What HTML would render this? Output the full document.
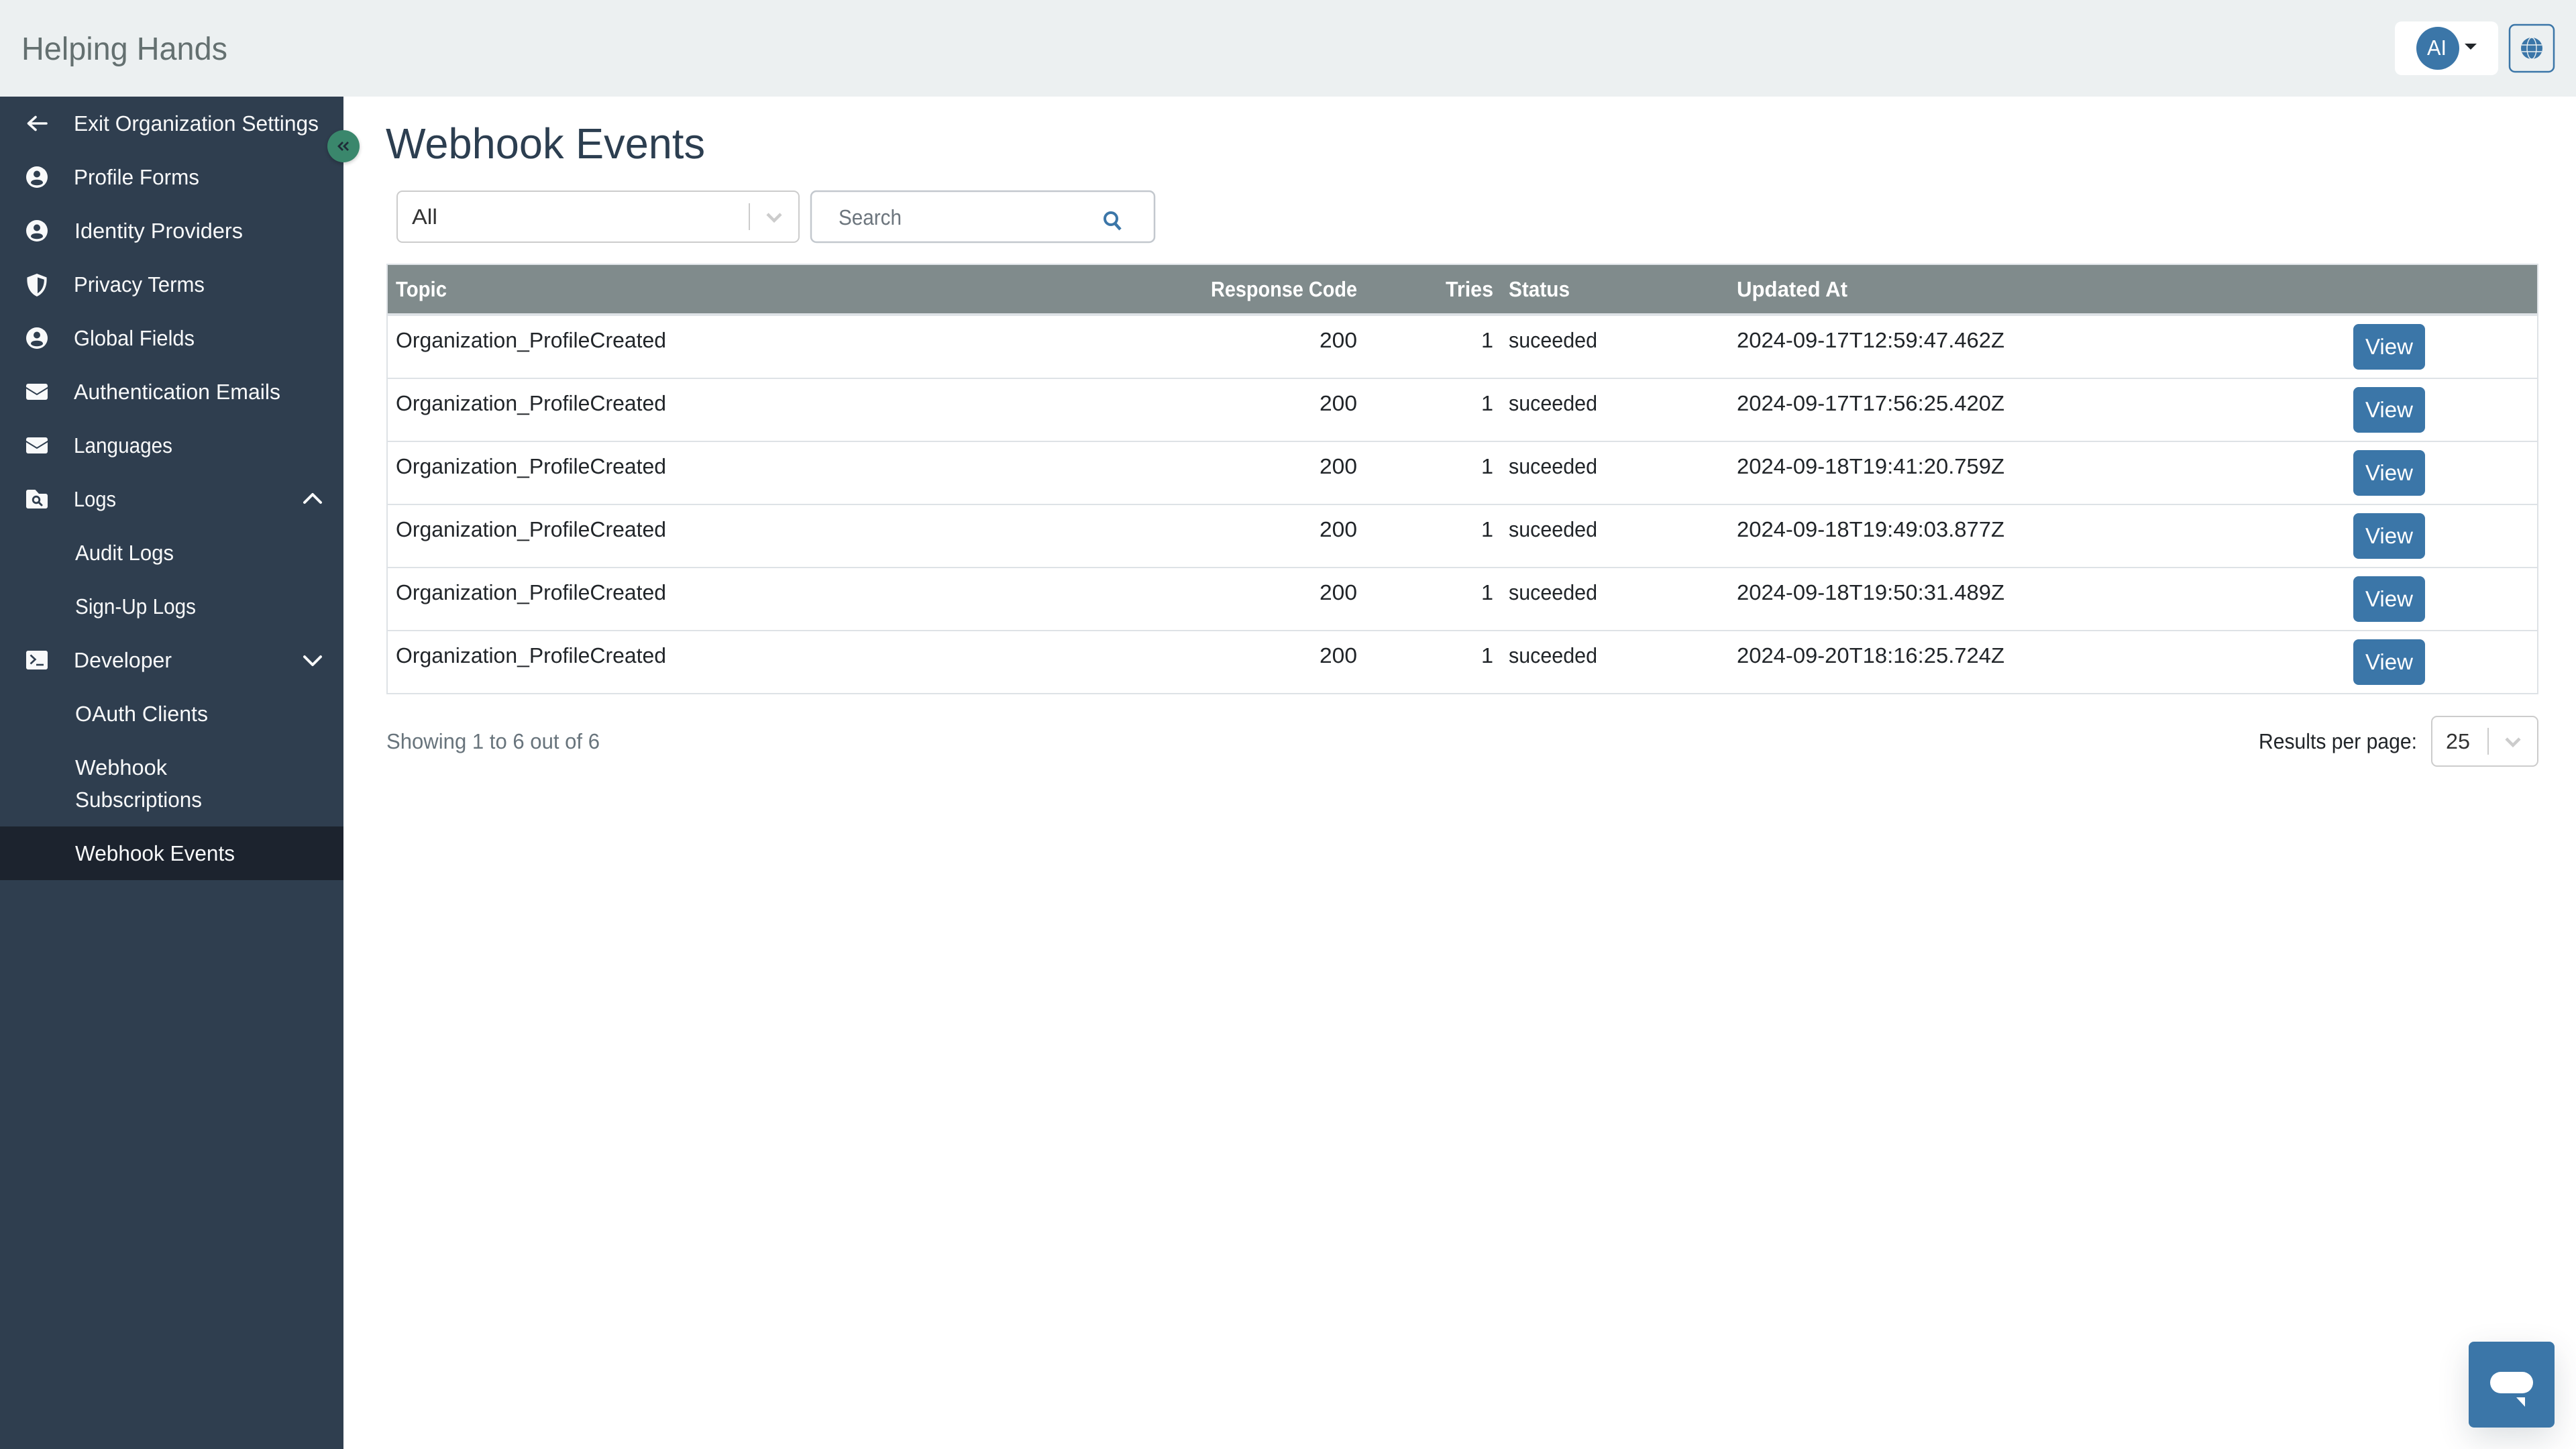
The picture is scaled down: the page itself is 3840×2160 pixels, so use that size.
<!DOCTYPE html>
<html lang="en">
<head>
<meta charset="utf-8">
<title>Webhook Events</title>
<style>
html,body{margin:0;padding:0;background:#fff;width:3840px;height:2160px;overflow:hidden}
svg{display:block;position:absolute;left:0;top:0}
text{font-family:"Liberation Sans",Arial,sans-serif;font-size:32px;text-rendering:geometricPrecision}
.s{fill:#f8f9fa}
.d{fill:#212529}
.h{fill:#fff;font-weight:700}
.b{fill:#fff;font-size:33px}
.m{fill:#68747c}
.ic{fill:#f8f9fa}
.dk{fill:#2f3e4f}
</style>
</head>
<body>
<svg width="3840" height="2160" viewBox="0 0 3840 2160" xmlns="http://www.w3.org/2000/svg">
<defs>
<filter id="sh" x="-80%" y="-80%" width="260%" height="260%"><feGaussianBlur stdDeviation="24"/></filter>
<filter id="sh2" x="-50%" y="-50%" width="200%" height="200%"><feGaussianBlur stdDeviation="3"/></filter>
<g id="user"><circle cx="55" cy="264" r="16" class="ic"/><circle cx="55" cy="259.500" r="5" class="dk"/><path d="M46 272.500c0-3 3.500-4.800 9-4.800s9 1.800 9 4.800c0 1.600-4 3.700-9 3.700s-9-2.100-9-3.700z" class="dk"/></g>
<g id="mail"><rect x="39" y="572" width="32" height="24" rx="3" class="ic"/><path d="M38 577.500l17 10.500 17-10.500" fill="none" stroke="#2f3e4f" stroke-width="2"/></g>
</defs>

<!-- top bar -->
<rect x="0" y="0" width="3840" height="144" fill="#ecf0f1"/>
<text x="32" y="89" style="font-size:48px" fill="#647070" textLength="307" lengthAdjust="spacingAndGlyphs">Helping Hands</text>
<rect x="3570" y="32" width="154" height="80" rx="10" fill="#fff"/>
<circle cx="3634" cy="72" r="32" fill="#3b76a8"/>
<text x="3618" y="82" style="font-size:32px" fill="#fff" textLength="29" lengthAdjust="spacingAndGlyphs">AI</text>
<path d="M3674 65h18l-9 9z" fill="#212529"/>
<rect x="3741" y="37" width="66" height="70" rx="8" fill="none" stroke="#3b76a8" stroke-width="2.500"/>
<circle cx="3774" cy="72" r="16" fill="#3b76a8"/>
<ellipse cx="3774" cy="72" rx="7" ry="16" fill="none" stroke="#ecf0f1" stroke-width="1.400"/>
<path d="M3759 67h30M3759 77h30" stroke="#ecf0f1" stroke-width="1.400" fill="none"/>

<!-- sidebar -->
<rect x="0" y="144" width="512" height="2016" fill="#2f3e4f"/>
<rect x="0" y="1232" width="512" height="80" fill="#1c232e"/>

<path d="M69 184H43M53 174.500L42.500 184 53 193.500" fill="none" stroke="#f8f9fa" stroke-width="3.600" stroke-linecap="round" stroke-linejoin="round"/>
<use href="#user"/>
<use href="#user" y="80"/>
<path d="M55 408l14.500 5.500c.8 12-3 23-14.500 28.500-11.500-5.500-15.300-16.500-14.500-28.500z" class="ic"/>
<path d="M56 413.500l9.800 3.300c.2 8.500-2.800 16-9.800 20.500z" class="dk"/>
<use href="#user" y="240"/>
<use href="#mail"/>
<use href="#mail" y="80"/>
<path d="M39 733c0-1.700 1.300-3 3-3h10.500l5.500 6h10c1.700 0 3 1.300 3 3v16c0 1.700-1.300 3-3 3H42c-1.700 0-3-1.300-3-3z" class="ic"/>
<circle cx="54" cy="745" r="4.800" fill="none" stroke="#2f3e4f" stroke-width="2.800"/>
<path d="M57.500 748.500L62 753" stroke="#2f3e4f" stroke-width="3" stroke-linecap="round"/>
<path d="M39 973c0-1.700 1.300-3 3-3h26c1.700 0 3 1.300 3 3v22c0 1.700-1.300 3-3 3H42c-1.700 0-3-1.300-3-3z" class="ic"/>
<path d="M45.500 976.500l7 6.500-7 6.500" fill="none" stroke="#2f3e4f" stroke-width="2.600"/>
<path d="M54 991h11" stroke="#2f3e4f" stroke-width="2.600"/>

<text class="s" x="110" y="195" textLength="365" lengthAdjust="spacingAndGlyphs">Exit Organization Settings</text>
<text class="s" x="110" y="275" textLength="187" lengthAdjust="spacingAndGlyphs">Profile Forms</text>
<text class="s" x="111" y="355" textLength="251" lengthAdjust="spacingAndGlyphs">Identity Providers</text>
<text class="s" x="110" y="435" textLength="195" lengthAdjust="spacingAndGlyphs">Privacy Terms</text>
<text class="s" x="110" y="515" textLength="180" lengthAdjust="spacingAndGlyphs">Global Fields</text>
<text class="s" x="110" y="595" textLength="308" lengthAdjust="spacingAndGlyphs">Authentication Emails</text>
<text class="s" x="110" y="675" textLength="147" lengthAdjust="spacingAndGlyphs">Languages</text>
<text class="s" x="110" y="755" textLength="63" lengthAdjust="spacingAndGlyphs">Logs</text>
<text class="s" x="112" y="835" textLength="147" lengthAdjust="spacingAndGlyphs">Audit Logs</text>
<text class="s" x="112" y="915" textLength="180" lengthAdjust="spacingAndGlyphs">Sign-Up Logs</text>
<text class="s" x="110" y="995" textLength="146" lengthAdjust="spacingAndGlyphs">Developer</text>
<text class="s" x="112" y="1075" textLength="198" lengthAdjust="spacingAndGlyphs">OAuth Clients</text>
<text class="s" x="112" y="1155" textLength="137" lengthAdjust="spacingAndGlyphs">Webhook</text>
<text class="s" x="112" y="1203" textLength="189" lengthAdjust="spacingAndGlyphs">Subscriptions</text>
<text class="s" x="112" y="1283" textLength="238" lengthAdjust="spacingAndGlyphs">Webhook Events</text>

<path d="M454 749l12-12 12 12" fill="none" stroke="#f8f9fa" stroke-width="4" stroke-linecap="round" stroke-linejoin="round"/>
<path d="M454 979l12 12 12-12" fill="none" stroke="#f8f9fa" stroke-width="4" stroke-linecap="round" stroke-linejoin="round"/>

<!-- collapse -->
<circle cx="512" cy="220" r="24" fill="#000" opacity=".22" filter="url(#sh2)"/>
<circle cx="512" cy="218" r="24" fill="#3a876c"/>
<path d="M511 212l-6 6 6 6M519 212l-6 6 6 6" fill="none" stroke="#1f2c38" stroke-width="2.800"/>

<!-- title -->
<text x="575" y="236" style="font-size:64px" fill="#2c3e50" textLength="476" lengthAdjust="spacingAndGlyphs">Webhook Events</text>

<!-- filters -->
<rect x="592" y="285" width="599" height="76" rx="8" fill="#fff" stroke="#cccccc" stroke-width="2"/>
<rect x="1116" y="303" width="2" height="40" fill="#cccccc"/>
<path d="M1144 319l10 10 10-10" fill="none" stroke="#cccccc" stroke-width="4.500"/>
<text x="614" y="334" style="font-size:32px" fill="#333" textLength="38" lengthAdjust="spacingAndGlyphs">All</text>
<rect x="1209" y="285" width="512" height="76" rx="8" fill="#fff" stroke="#c3c8ce" stroke-width="2.500"/>
<text x="1250" y="335" style="font-size:32px" fill="#6c757d" textLength="94" lengthAdjust="spacingAndGlyphs">Search</text>
<circle cx="1656" cy="326" r="9" fill="none" stroke="#3b76a8" stroke-width="4"/>
<path d="M1662 333l8 9" stroke="#3b76a8" stroke-width="4.500" fill="none"/>

<!-- table -->
<rect x="576" y="393" width="3208" height="642" fill="#dee2e6"/>
<rect x="578" y="395" width="3204" height="72" fill="#808b8c"/>
<rect x="578" y="471" width="3204" height="92" fill="#fff"/>
<rect x="578" y="565" width="3204" height="92" fill="#fff"/>
<rect x="578" y="659" width="3204" height="92" fill="#fff"/>
<rect x="578" y="753" width="3204" height="92" fill="#fff"/>
<rect x="578" y="847" width="3204" height="92" fill="#fff"/>
<rect x="578" y="941" width="3204" height="92" fill="#fff"/>

<text class="h" x="590" y="442" textLength="76" lengthAdjust="spacingAndGlyphs">Topic</text>
<text class="h" x="1805" y="442" textLength="218" lengthAdjust="spacingAndGlyphs">Response Code</text>
<text class="h" x="2155" y="442" textLength="71" lengthAdjust="spacingAndGlyphs">Tries</text>
<text class="h" x="2249" y="442" textLength="91" lengthAdjust="spacingAndGlyphs">Status</text>
<text class="h" x="2589" y="442" textLength="165" lengthAdjust="spacingAndGlyphs">Updated At</text>

<text class="d" x="590" y="518" textLength="403" lengthAdjust="spacingAndGlyphs">Organization_ProfileCreated</text>
<text class="d" x="1967" y="518" textLength="56" lengthAdjust="spacingAndGlyphs">200</text>
<text class="d" x="2208" y="518" textLength="18" lengthAdjust="spacingAndGlyphs">1</text>
<text class="d" x="2249" y="518" textLength="132" lengthAdjust="spacingAndGlyphs">suceeded</text>
<text class="d" x="2589" y="518" textLength="399" lengthAdjust="spacingAndGlyphs">2024-09-17T12:59:47.462Z</text>
<rect x="3508" y="483" width="107" height="68" rx="8" fill="#3b76a8"/>
<text class="b" x="3526" y="528" textLength="71" lengthAdjust="spacingAndGlyphs">View</text>

<text class="d" x="590" y="612" textLength="403" lengthAdjust="spacingAndGlyphs">Organization_ProfileCreated</text>
<text class="d" x="1967" y="612" textLength="56" lengthAdjust="spacingAndGlyphs">200</text>
<text class="d" x="2208" y="612" textLength="18" lengthAdjust="spacingAndGlyphs">1</text>
<text class="d" x="2249" y="612" textLength="132" lengthAdjust="spacingAndGlyphs">suceeded</text>
<text class="d" x="2589" y="612" textLength="399" lengthAdjust="spacingAndGlyphs">2024-09-17T17:56:25.420Z</text>
<rect x="3508" y="577" width="107" height="68" rx="8" fill="#3b76a8"/>
<text class="b" x="3526" y="622" textLength="71" lengthAdjust="spacingAndGlyphs">View</text>

<text class="d" x="590" y="706" textLength="403" lengthAdjust="spacingAndGlyphs">Organization_ProfileCreated</text>
<text class="d" x="1967" y="706" textLength="56" lengthAdjust="spacingAndGlyphs">200</text>
<text class="d" x="2208" y="706" textLength="18" lengthAdjust="spacingAndGlyphs">1</text>
<text class="d" x="2249" y="706" textLength="132" lengthAdjust="spacingAndGlyphs">suceeded</text>
<text class="d" x="2589" y="706" textLength="399" lengthAdjust="spacingAndGlyphs">2024-09-18T19:41:20.759Z</text>
<rect x="3508" y="671" width="107" height="68" rx="8" fill="#3b76a8"/>
<text class="b" x="3526" y="716" textLength="71" lengthAdjust="spacingAndGlyphs">View</text>

<text class="d" x="590" y="800" textLength="403" lengthAdjust="spacingAndGlyphs">Organization_ProfileCreated</text>
<text class="d" x="1967" y="800" textLength="56" lengthAdjust="spacingAndGlyphs">200</text>
<text class="d" x="2208" y="800" textLength="18" lengthAdjust="spacingAndGlyphs">1</text>
<text class="d" x="2249" y="800" textLength="132" lengthAdjust="spacingAndGlyphs">suceeded</text>
<text class="d" x="2589" y="800" textLength="399" lengthAdjust="spacingAndGlyphs">2024-09-18T19:49:03.877Z</text>
<rect x="3508" y="765" width="107" height="68" rx="8" fill="#3b76a8"/>
<text class="b" x="3526" y="810" textLength="71" lengthAdjust="spacingAndGlyphs">View</text>

<text class="d" x="590" y="894" textLength="403" lengthAdjust="spacingAndGlyphs">Organization_ProfileCreated</text>
<text class="d" x="1967" y="894" textLength="56" lengthAdjust="spacingAndGlyphs">200</text>
<text class="d" x="2208" y="894" textLength="18" lengthAdjust="spacingAndGlyphs">1</text>
<text class="d" x="2249" y="894" textLength="132" lengthAdjust="spacingAndGlyphs">suceeded</text>
<text class="d" x="2589" y="894" textLength="399" lengthAdjust="spacingAndGlyphs">2024-09-18T19:50:31.489Z</text>
<rect x="3508" y="859" width="107" height="68" rx="8" fill="#3b76a8"/>
<text class="b" x="3526" y="904" textLength="71" lengthAdjust="spacingAndGlyphs">View</text>

<text class="d" x="590" y="988" textLength="403" lengthAdjust="spacingAndGlyphs">Organization_ProfileCreated</text>
<text class="d" x="1967" y="988" textLength="56" lengthAdjust="spacingAndGlyphs">200</text>
<text class="d" x="2208" y="988" textLength="18" lengthAdjust="spacingAndGlyphs">1</text>
<text class="d" x="2249" y="988" textLength="132" lengthAdjust="spacingAndGlyphs">suceeded</text>
<text class="d" x="2589" y="988" textLength="399" lengthAdjust="spacingAndGlyphs">2024-09-20T18:16:25.724Z</text>
<rect x="3508" y="953" width="107" height="68" rx="8" fill="#3b76a8"/>
<text class="b" x="3526" y="998" textLength="71" lengthAdjust="spacingAndGlyphs">View</text>

<!-- footer -->
<text class="m" x="576" y="1116" textLength="318" lengthAdjust="spacingAndGlyphs">Showing 1 to 6 out of 6</text>
<text class="d" x="3367" y="1116" textLength="236" lengthAdjust="spacingAndGlyphs">Results per page:</text>
<rect x="3625" y="1068" width="158" height="74" rx="8" fill="#fff" stroke="#cccccc" stroke-width="2"/>
<rect x="3708" y="1085" width="2" height="40" fill="#cccccc"/>
<path d="M3736 1101l10 10 10-10" fill="none" stroke="#cccccc" stroke-width="4.500"/>
<text x="3646" y="1116" style="font-size:32px" fill="#333" textLength="36" lengthAdjust="spacingAndGlyphs">25</text>

<!-- chat -->
<rect x="3680" y="2016" width="128" height="128" rx="8" fill="#2c3e50" opacity=".16" filter="url(#sh)"/>
<rect x="3680" y="2000" width="128" height="128" rx="8" fill="#3b76a8"/>
<rect x="3712" y="2045" width="64" height="32" rx="16" fill="#fff"/>
<path d="M3751 2083h13v14z" fill="#fff"/>
</svg>
</body>
</html>
